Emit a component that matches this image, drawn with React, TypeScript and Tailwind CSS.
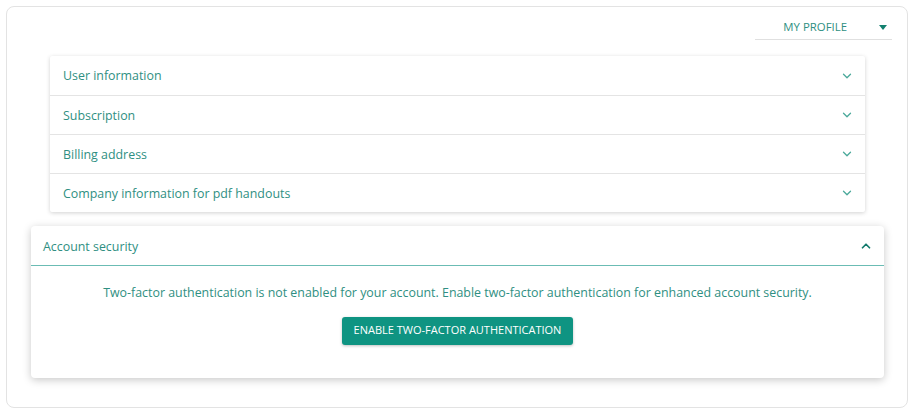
import { ChevronDown, ChevronUp } from "lucide-react";

const SECTIONS = [
  "User information",
  "Subscription",
  "Billing address",
  "Company information for pdf handouts",
];

export default function App() {
  return (
    <div className="w-[920px] h-[417px] bg-white pt-[6px] px-[6px] font-['Open_Sans',sans-serif]">
      <div className="w-[902px] h-[402px] rounded-lg border border-[#e3e3e3] bg-white flex flex-col">
        {/* profile dropdown */}
        <div className="flex justify-end pr-[15px] pt-[7px]">
          <button className="w-[137px] h-[26px] pt-[1px] border-b border-[#e0e0e0] flex items-center justify-end gap-[32px] pr-[3px] text-[11.4px] text-[#2f8f82]">
            <span>MY PROFILE</span>
            <svg width="8" height="5" viewBox="0 0 8 5" className="mr-[2px]">
              <path d="M0 0h8L4 5z" fill="#12806f" />
            </svg>
          </button>
        </div>

        {/* collapsed panels */}
        <div className="mt-[16px] ml-[43px] w-[815px] bg-white shadow-[0_1px_4px_rgba(0,0,0,0.18)] rounded-[2px]">
          {SECTIONS.map((s, i) => (
            <div
              key={s}
              className={`h-[39px] pt-[2px] flex items-center justify-between pl-[13px] pr-[11px] text-[12.4px] text-[#2f8f82] ${i > 0 ? "border-t border-[#e4e4e4]" : ""}`}
            >
              <span>{s}</span>
              <ChevronDown size={14} strokeWidth={2.2} className="text-[#4aa99b] -mt-[2px]" />
            </div>
          ))}
        </div>

        {/* expanded panel */}
        <div className="mt-[14px] ml-[24px] w-[853px] h-[152px] bg-white rounded-[4px] shadow-[0_2px_8px_rgba(0,0,0,0.22)]">
          <div className="h-[40px] pt-[3px] flex items-center justify-between pl-[12px] pr-[11px] border-b border-[#6bbcb4] text-[12.4px] text-[#2f8f82]">
            <span>Account security</span>
            <ChevronUp size={14} strokeWidth={3} className="text-[#137a6c] -mt-[3px]" />
          </div>
          <div className="flex flex-col items-center pt-[18px]">
            <p className="text-[12.4px] text-[#2f8f82]">
              Two-factor authentication is not enabled for your account. Enable two-factor authentication for enhanced account security.
            </p>
            <button className="mt-[14px] h-[28px] w-[231px] rounded-[3px] bg-[#0f9482] text-white text-[11px] shadow-[0_1px_3px_rgba(0,0,0,0.25)]">
              ENABLE TWO-FACTOR AUTHENTICATION
            </button>
          </div>
        </div>
      </div>
    </div>
  );
}
